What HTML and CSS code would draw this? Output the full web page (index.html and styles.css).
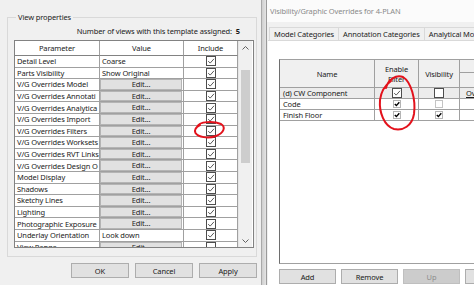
FILE: index.html
```html
<!DOCTYPE html>
<html>
<head>
<meta charset="utf-8">
<link rel="stylesheet" href="styles.css">
</head>
<body>
<svg class="defs" width="0" height="0">
  <symbol id="cb-gray" viewBox="0 0 10 10"><rect x="0.5" y="0.5" width="9" height="9" fill="#fff" stroke="#4d4d4d"/><path d="M2.2 5.1 L4.2 7.1 L8 2.8" fill="none" stroke="#5a5a5a" stroke-width="1"/></symbol>
  <symbol id="cb-empty" viewBox="0 0 10 10"><rect x="0.5" y="0.5" width="9" height="9" fill="#fff" stroke="#4d4d4d"/></symbol>
  <symbol id="cb-black" viewBox="0 0 8 8"><rect x="0.5" y="0.5" width="7" height="7" fill="#fff" stroke="#b4b4b4"/><path d="M1.8 4 L3.4 5.6 L6.3 2.3" fill="none" stroke="#000" stroke-width="1.4"/></symbol>
  <symbol id="cb-light" viewBox="0 0 8 8"><rect x="0.5" y="0.5" width="7" height="7" fill="#fff" stroke="#c4c4c4"/></symbol>
</svg>

<div class="screen">
  <div class="dlg-left">
    <fieldset class="group">
      <legend>View properties</legend>
      <div class="count">Number of views with this template assigned: <b>5</b></div>
      <div class="grid">
        <div class="tbl">
          <div class="row head">
            <div class="c1">Parameter</div><div class="c2">Value</div><div class="c3">Include</div>
          </div>
          <div class="body">
            <div class="row"><div class="c1">Detail Level</div><div class="c2 txt">Coarse</div><div class="c3"><svg class="cb"><use href="#cb-gray"/></svg></div></div>
            <div class="row"><div class="c1">Parts Visibility</div><div class="c2 txt">Show Original</div><div class="c3"><svg class="cb"><use href="#cb-gray"/></svg></div></div>
            <div class="row"><div class="c1">V/G Overrides Model</div><div class="c2"><span class="edit">Edit...</span></div><div class="c3"><svg class="cb"><use href="#cb-gray"/></svg></div></div>
            <div class="row"><div class="c1">V/G Overrides Annotati</div><div class="c2"><span class="edit">Edit...</span></div><div class="c3"><svg class="cb"><use href="#cb-gray"/></svg></div></div>
            <div class="row"><div class="c1">V/G Overrides Analytica</div><div class="c2"><span class="edit">Edit...</span></div><div class="c3"><svg class="cb"><use href="#cb-gray"/></svg></div></div>
            <div class="row"><div class="c1">V/G Overrides Import</div><div class="c2"><span class="edit">Edit...</span></div><div class="c3"><svg class="cb"><use href="#cb-gray"/></svg></div></div>
            <div class="row"><div class="c1">V/G Overrides Filters</div><div class="c2"><span class="edit">Edit...</span></div><div class="c3"><svg class="cb"><use href="#cb-gray"/></svg></div></div>
            <div class="row"><div class="c1">V/G Overrides Worksets</div><div class="c2"><span class="edit">Edit...</span></div><div class="c3"><svg class="cb"><use href="#cb-gray"/></svg></div></div>
            <div class="row"><div class="c1">V/G Overrides RVT Links</div><div class="c2"><span class="edit">Edit...</span></div><div class="c3"><svg class="cb"><use href="#cb-gray"/></svg></div></div>
            <div class="row"><div class="c1">V/G Overrides Design O</div><div class="c2"><span class="edit">Edit...</span></div><div class="c3"><svg class="cb"><use href="#cb-gray"/></svg></div></div>
            <div class="row"><div class="c1">Model Display</div><div class="c2"><span class="edit">Edit...</span></div><div class="c3"><svg class="cb"><use href="#cb-gray"/></svg></div></div>
            <div class="row"><div class="c1">Shadows</div><div class="c2"><span class="edit">Edit...</span></div><div class="c3"><svg class="cb"><use href="#cb-gray"/></svg></div></div>
            <div class="row"><div class="c1">Sketchy Lines</div><div class="c2"><span class="edit">Edit...</span></div><div class="c3"><svg class="cb"><use href="#cb-gray"/></svg></div></div>
            <div class="row"><div class="c1">Lighting</div><div class="c2"><span class="edit">Edit...</span></div><div class="c3"><svg class="cb"><use href="#cb-gray"/></svg></div></div>
            <div class="row"><div class="c1">Photographic Exposure</div><div class="c2"><span class="edit">Edit...</span></div><div class="c3"><svg class="cb"><use href="#cb-gray"/></svg></div></div>
            <div class="row"><div class="c1">Underlay Orientation</div><div class="c2 txt">Look down</div><div class="c3"><svg class="cb"><use href="#cb-gray"/></svg></div></div>
            <div class="row"><div class="c1">View Range</div><div class="c2"><span class="edit">Edit...</span></div><div class="c3"><svg class="cb"><use href="#cb-empty"/></svg></div></div>
          </div>
        </div>
        <div class="scroll">
          <svg class="arr" viewBox="0 0 7 4"><path d="M0.5 3.5 L3.5 0.5 L6.5 3.5" fill="none" stroke="#606060"/></svg>
          <div class="track"><div class="thumb"></div></div>
          <svg class="arr" viewBox="0 0 7 4"><path d="M0.5 0.5 L3.5 3.5 L6.5 0.5" fill="none" stroke="#606060"/></svg>
        </div>
      </div>
    </fieldset>
    <div class="btns">
      <span class="btn">OK</span><span class="btn">Cancel</span><span class="btn">Apply</span>
    </div>
  </div>

  <div class="sep"></div>

  <div class="dlg-right">
    <div class="title">Visibility/Graphic Overrides for 4-PLAN</div>
    <div class="tabs">
      <span class="tab">Model Categories</span><span class="tab">Annotation Categories</span><span class="tab">Analytical Model Categories</span>
    </div>
    <div class="panel">
      <div class="ftable">
        <div class="frow fhead">
          <div class="f1">Name</div>
          <div class="f2">Enable<br>Filter</div>
          <div class="f3">Visibility</div>
          <div class="f4"><div class="f4a"></div><div class="f4b"></div></div>
        </div>
        <div class="frow sel">
          <div class="f1">(d) CW Component</div>
          <div class="f2"><svg class="cb"><use href="#cb-gray"/></svg></div>
          <div class="f3"><svg class="cb"><use href="#cb-empty"/></svg></div>
          <div class="f4"><span class="ov">Ov</span></div>
        </div>
        <div class="frow">
          <div class="f1">Code</div>
          <div class="f2"><svg class="cbs"><use href="#cb-black"/></svg></div>
          <div class="f3"><svg class="cbs"><use href="#cb-light"/></svg></div>
          <div class="f4"></div>
        </div>
        <div class="frow">
          <div class="f1">Finish Floor</div>
          <div class="f2"><svg class="cbs"><use href="#cb-black"/></svg></div>
          <div class="f3"><svg class="cbs"><use href="#cb-black"/></svg></div>
          <div class="f4"></div>
        </div>
      </div>
      <div class="fbtns">
        <span class="btn">Add</span><span class="btn">Remove</span><span class="btn off">Up</span><span class="btn">Down</span>
      </div>
    </div>
  </div>

  <svg class="marks" viewBox="0 0 474 285">
    <path d="M197 127 C199 121, 214 121, 221 124 C226 127, 224 133, 216 136 C208 139, 198 137, 195.5 133 C194 130, 196 127, 200 125" fill="none" stroke="#e3121c" stroke-width="2" stroke-linecap="round"/>
    <path d="M386 88 C388 80, 396 74, 403 77 C411 82, 416 99, 414 114 C412 126, 403 131, 394 129 C384 126, 379 112, 380 100 C381 92, 384 86, 391 81" fill="none" stroke="#e3121c" stroke-width="2" stroke-linecap="round"/>
  </svg>
</div>
</body>
</html>
```

FILE: styles.css
```css
* { box-sizing: border-box; }
html, body { margin: 0; padding: 0; }
body {
  width: 474px;
  height: 285px;
  overflow: hidden;
  font-family: "Noto Sans", "Open Sans", sans-serif;
  font-size: 7.5px;
  letter-spacing: -0.12px;
  color: #1a1a1a;
  background: #f0f0f0;
}
.defs { position: absolute; }
.screen {
  position: relative;
  display: flex;
  width: 474px;
  height: 285px;
}

/* ---------- left dialog ---------- */
.dlg-left {
  width: 262px;
  flex: none;
  background: #f0f0f0;
  padding: 12px 4px 0 7px;
  display: flex;
  flex-direction: column;
  border-right: 1px solid #a9a9a9;
}
.group {
  margin: 0;
  padding: 0 2px 0 6px;
  border: 1px solid #d9d9d9;
  height: 245px;
  min-width: 0;
  flex: none;
}
.group legend {
  padding: 0 2px;
  margin-left: 2px;
  line-height: 10px;
  color: #222;
}
.count {
  text-align: right;
  padding-right: 14px;
  line-height: 10px;
  margin-top: 4px;
  height: 14px;
}
.count b { font-weight: 700; margin-left: 2px; }
.grid {
  display: flex;
  height: 208px;
  border: 1px solid #828282;
  background: #fff;
}
.tbl {
  width: 223px;
  display: flex;
  flex-direction: column;
  overflow: hidden;
}
.row {
  display: grid;
  grid-template-columns: 85px 84px 54px;
  height: 11.6px;
  flex: none;
}
.row > div {
  border-right: 1px solid #a0a0a0;
  border-bottom: 1px solid #a0a0a0;
  display: flex;
  align-items: center;
  white-space: nowrap;
  overflow: hidden;
  line-height: 10px;
}
.row .c1 { padding-left: 2px; }
.row .c2.txt { padding-left: 2px; }
.row .c3 { justify-content: center; }
.head { height: 15px; }
.head > div { justify-content: center; padding-left: 0 !important; border-bottom-color: #828282; }
.body { display: flex; flex-direction: column; overflow: hidden; }
.edit {
  flex: 1;
  align-self: stretch;
  background: #e1e1e1;
  border: 1px solid #b4b4b4;
  margin: 0 1px 0 0;
  text-align: center;
  line-height: 9px;
}
.cb { width: 10px; height: 10px; display: block; }
.cbs { width: 8px; height: 8px; display: block; }

.scroll {
  width: 14px;
  background: #f0f0f0;
  display: flex;
  flex-direction: column;
  align-items: center;
  padding: 5px 0 4px;
  border-left: 1px solid #e6e6e6;
}
.arr { width: 7px; height: 4px; flex: none; }
.track { flex: 1; width: 100%; padding: 20px 2px 76px; }
.thumb { height: 100%; background: #cdcdcd; }

.btns {
  display: flex;
  justify-content: flex-end;
  gap: 6px;
  margin-top: 6px;
}
.btn {
  width: 58px;
  height: 15px;
  background: #e1e1e1;
  border: 1px solid #adadad;
  display: flex;
  align-items: center;
  justify-content: center;
  flex: none;
}
.btn.off { background: #cccccc; color: #8d8d8d; border-color: #bfbfbf; }

.sep {
  width: 4px;
  flex: none;
  background: linear-gradient(to right, #cfcfcf, #e4e4e4);
}

/* ---------- right dialog ---------- */
.dlg-right {
  flex: 1;
  min-width: 0;
  display: flex;
  flex-direction: column;
  border-left: 1px solid #9a9a9a;
  background: #f0f0f0;
}
.title {
  height: 22px;
  background: #fbfbfb;
  color: #8a8a8a;
  padding-left: 3px;
  line-height: 22px;
  white-space: nowrap;
}
.tabs {
  display: flex;
  margin-top: 5px;
  padding-left: 2px;
  height: 13px;
  white-space: nowrap;
}
.tab {
  padding: 0 4px;
  line-height: 12px;
  border: 1px solid #d9d9d9;
  border-bottom: none;
  margin-right: -1px;
  background: #f0f0f0;
  color: #222;
  flex: none;
}
.panel {
  flex: 1;
  background: #fff;
  border-top: 1px solid #d9d9d9;
  margin-left: 1px;
  padding: 18px 0 0 11px;
  display: flex;
  flex-direction: column;
}
.ftable {
  height: 205px;
  border-left: 1px solid #6e6e6e;
  border-top: 1px solid #a0a0a0;
  border-bottom: 1px solid #a0a0a0;
  background: #fff;
}
.frow {
  display: grid;
  grid-template-columns: 95px 44px 41px 1fr;
  height: 11px;
}
.frow > div {
  border-right: 1px solid #a0a0a0;
  border-bottom: 1px solid #a0a0a0;
  display: flex;
  align-items: center;
  line-height: 10px;
  white-space: nowrap;
  overflow: hidden;
}
.frow .f1 { padding-left: 3px; }
.frow .f2, .frow .f3 { justify-content: center; }
.frow .f4 { border-right: none; padding-left: 6px; }
.fhead { height: 28px; background: #f0f0f0; }
.fhead > div { justify-content: center; text-align: center; padding-left: 0 !important; }
.fhead .f4 { flex-direction: column; align-items: stretch; }
.f4a { height: 13px; border-bottom: 1px solid #a0a0a0; }
.f4b { flex: 1; }
.sel { background: #ececec; }
.ov { text-decoration: underline; }
.fbtns {
  display: flex;
  gap: 5px;
  margin-top: 5px;
}
.fbtns .btn { width: 57px; }

.marks {
  position: absolute;
  left: 0;
  top: 0;
  width: 474px;
  height: 285px;
  pointer-events: none;
}
```
